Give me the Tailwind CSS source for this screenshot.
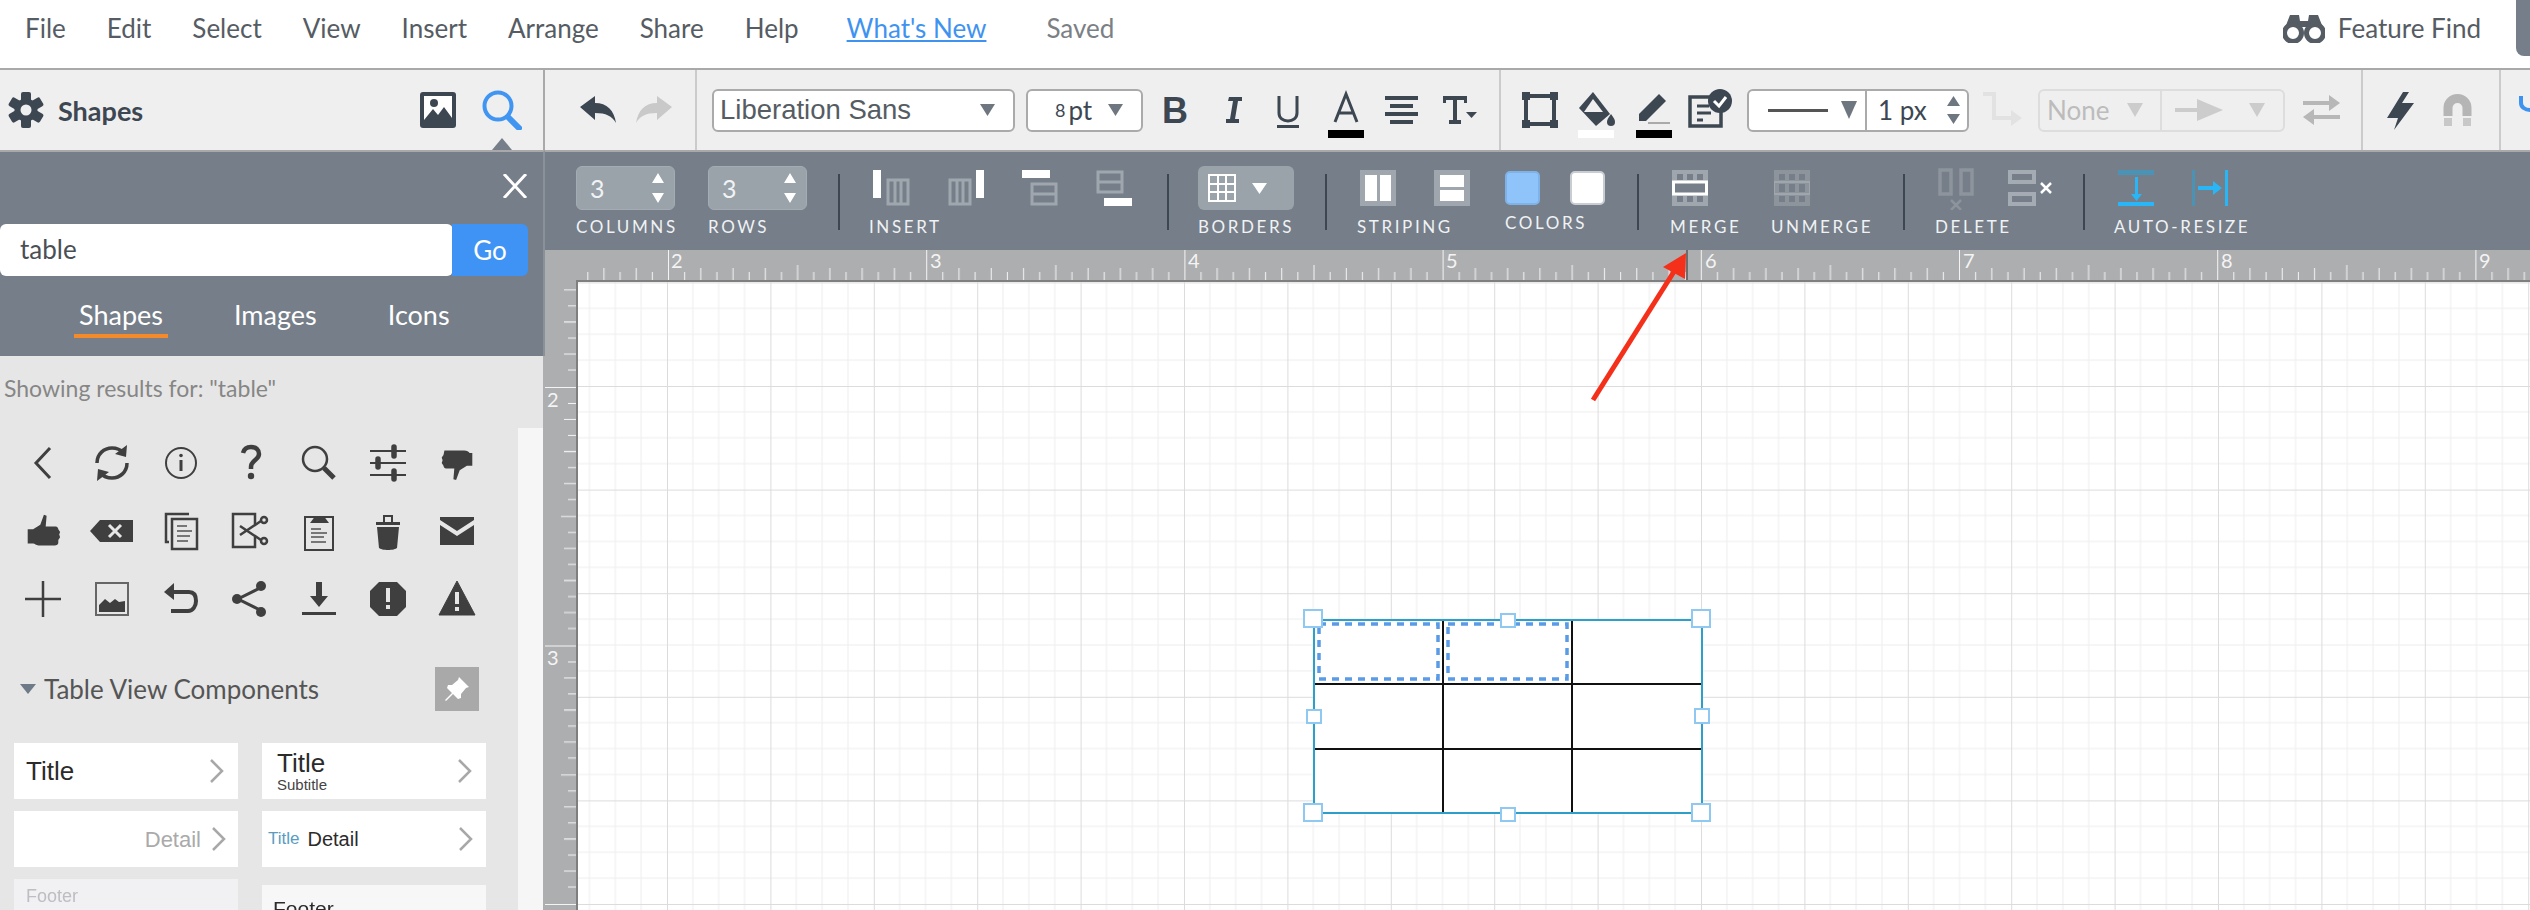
<!DOCTYPE html>
<html lang="en">
<head>
<meta charset="UTF-8">
<title>Lucidchart</title>
<script src="https://cdn.jsdelivr.net/npm/@tailwindcss/browser@4"></script>
</head>
<body class="font-[Lato,sans-serif] bg-white overflow-hidden">
<div class="relative w-[2530px] h-[910px] overflow-hidden">

  <!-- menu -->
  <header class="h-[70px] border-b-2 border-[#a9a9a9] flex items-start pl-[25px] pt-[12px] text-[26px] leading-[32px] text-[#555c63]">
    <nav class="flex gap-[41px]">
      <span>File</span><span>Edit</span><span>Select</span><span>View</span><span>Insert</span><span>Arrange</span><span>Share</span><span>Help</span>
    </nav>
    <a class="ml-[48px] text-[#3f93f0] underline">What's New</a>
    <span class="ml-[60px] text-[#7b8085]">Saved</span>
    <svg class="ml-auto mt-[1px]" width="42" height="30" viewBox="0 0 42 30" fill="#555c63"><path d="M7 2h9l1 6h8l1-6h9l7 18-12 3-6-9h-6l-6 9-12-3z"/><circle cx="10" cy="20" r="8.5" fill="#fff" stroke="#555c63" stroke-width="5"/><circle cx="32" cy="20" r="8.5" fill="#fff" stroke="#555c63" stroke-width="5"/></svg>
    <span class="ml-[13px]">Feature Find</span>
    <div class="ml-[35px] -mt-[12px] w-[14px] h-[56px] bg-[#757e89] rounded-bl-[8px]"></div>
  </header>

  <div class="flex h-[840px]">
    <!-- left panel -->
    <aside class="w-[545px] shrink-0 flex flex-col">
      <div class="h-[80px] bg-[#efefef] border-r-2 border-[#a9a9a9] flex items-center pl-[8px] relative">
        <svg width="36" height="36" viewBox="0 0 36 36" fill="#3d4752"><g><rect x="13" y="0" width="10" height="36" rx="2"/><rect x="13" y="0" width="10" height="36" rx="2" transform="rotate(60 18 18)"/><rect x="13" y="0" width="10" height="36" rx="2" transform="rotate(120 18 18)"/></g><circle cx="18" cy="18" r="11.5"/><circle cx="18" cy="18" r="5.5" fill="#efefef"/></svg>
        <span class="ml-[14px] text-[27px] font-bold text-[#3d4752] mt-[3px]">Shapes</span>
        <svg class="ml-auto" width="36" height="36" viewBox="0 0 36 36"><rect width="36" height="36" rx="3" fill="#3d4752"/><rect x="4" y="4" width="28" height="26" fill="#fff"/><circle cx="14" cy="11" r="4" fill="#3d4752"/><path d="M4 28l9-11 5 6 6-8 8 11v4H4z" fill="#3d4752"/></svg>
        <svg class="ml-[26px] mr-[21px]" width="40" height="40" viewBox="0 0 40 40" fill="none" stroke="#4095f2"><circle cx="16" cy="16" r="13.5" stroke-width="4"/><path d="M26 27l11 11" stroke-width="6" stroke-linecap="round"/></svg>
        <div class="absolute left-[492px] bottom-0 w-0 h-0 border-x-[10px] border-x-transparent border-b-[12px] border-b-[#757e89]"></div>
      </div>
      <div class="h-[206px] bg-[#757e89] border-t-2 border-[#a9a9a9] border-r-2 border-r-[#8a9199] text-white">
        <div class="flex justify-end pr-[15px] pt-[22px]">
          <svg width="26" height="24" viewBox="0 0 26 24" stroke="#fff" stroke-width="3"><path d="M2 0l22 24M24 0L2 24"/></svg>
        </div>
        <div class="flex mt-[26px] w-[528px] h-[52px]">
          <div class="flex-1 bg-white rounded-[6px] pl-[20px] text-[26px] leading-[50px] text-[#4a4f55]">table</div>
          <div class="w-[76px] -ml-[1px] bg-[#3f93f5] rounded-r-[6px] text-center text-[26px] leading-[52px]">Go</div>
        </div>
        <div class="flex mt-[20px] text-[27px] leading-[38px]">
          <span class="ml-[74px] w-[94px] text-center border-b-4 border-[#f58a2a]">Shapes</span>
          <span class="ml-[66px]">Images</span>
          <span class="ml-[71px]">Icons</span>
        </div>
      </div>
      <div class="relative flex-1 bg-[#e6e6e6] border-r-2 border-[#adaeb0] overflow-hidden">
        <div class="absolute right-0 top-[72px] bottom-0 w-[25px] bg-[#f6f6f6]"></div>
        <p class="pl-[4px] pt-[18px] text-[23px] leading-[28px] text-[#868686]">Showing results for: "table"</p>
        <div class="grid grid-cols-[repeat(7,69px)] auto-rows-[68px] pl-[8px] mt-[27px] w-[500px] text-[#3f3f3f]">
          <div class="flex items-center justify-center"><svg width="40" height="40" viewBox="0 0 40 40" fill="none" stroke="currentColor" stroke-width="3"><path d="M27 5L13 20l14 15"/></svg></div>
          <div class="flex items-center justify-center"><svg width="40" height="40" viewBox="0 0 40 40" fill="none" stroke="currentColor" stroke-width="3.5"><path d="M5 20C5 11 12 5 20 5c5 0 9 2 12 5"/><path d="M35 20c0 9-7 15-15 15-5 0-9-2-12-5"/><path d="M35 2l-1 12-11-3zM5 38l1-12 11 3z" fill="currentColor" stroke="none"/></svg></div>
          <div class="flex items-center justify-center"><svg width="40" height="40" viewBox="0 0 40 40" fill="none" stroke="currentColor" stroke-width="2"><circle cx="20" cy="20" r="15"/><path d="M20 17v11" stroke-width="3"/><circle cx="20" cy="12.5" r="1.8" fill="currentColor" stroke="none"/></svg></div>
          <div class="flex items-center justify-center"><svg width="40" height="40" viewBox="0 0 40 40" fill="none" stroke="currentColor" stroke-width="4.5"><path d="M13 10c1-4 4-6 8-6 5 0 8 3 8 7 0 6-8 6-8 13v2"/><circle cx="21" cy="33" r="3.2" fill="currentColor" stroke="none"/></svg></div>
          <div class="flex items-center justify-center"><svg width="40" height="40" viewBox="0 0 40 40" fill="none" stroke="currentColor" stroke-width="2.5"><circle cx="16" cy="16" r="12"/><path d="M25 25l10 10" stroke-width="5"/></svg></div>
          <div class="flex items-center justify-center"><svg width="40" height="40" viewBox="0 0 40 40" fill="none" stroke="currentColor" stroke-width="2"><path d="M2 8h36M2 20h36M2 32h36"/><g stroke-width="5.5" stroke-linecap="round"><path d="M26 4v9M10 16v8M26 28v8"/></g></svg></div>
          <div class="flex items-center justify-center"><svg width="36" height="36" viewBox="0 0 40 40" fill="currentColor"><path d="M6 6h22c3 0 5 1 6 3h3v14h-6l-8 5-4 11-3-1 1-12H8c-2 0-3-2-3-3l-2-3 1-3-1-3 2-3z"/></svg></div>

          <div class="flex items-center justify-center"><svg width="36" height="36" viewBox="0 0 40 40" fill="currentColor"><path d="M3 18h6l8-5 4-11 3 1-1 12h11c2 0 3 2 3 3l2 3-1 3 1 3-2 3 0 3c0 2-2 3-4 3H15c-3 0-4-2-6-2H3z"/></svg></div>
          <div class="flex items-center justify-center"><svg width="44" height="40" viewBox="0 0 44 40"><path d="M0 20L10 9h33v22H10z" fill="currentColor"/><path d="M19 14l12 12M31 14L19 26" stroke="#e6e6e6" stroke-width="3"/></svg></div>
          <div class="flex items-center justify-center"><svg width="40" height="40" viewBox="0 0 40 40" fill="none" stroke="currentColor" stroke-width="2.5"><path d="M28 3H5v28h3"/><rect x="11" y="8" width="25" height="30"/><path d="M16 15h10M16 20h15M16 25h13M16 30h11" stroke-width="1.8" stroke="#777"/></svg></div>
          <div class="flex items-center justify-center"><svg width="40" height="40" viewBox="0 0 40 40" fill="none" stroke="currentColor" stroke-width="2.5"><path d="M25 13V3H3v33h22V26"/><path d="M10 24l21-14M10 15l21 14" stroke-width="2.5"/><circle cx="34" cy="9" r="3"/><circle cx="34" cy="30" r="3"/></svg></div>
          <div class="flex items-center justify-center"><svg width="40" height="40" viewBox="0 0 40 40" fill="none" stroke="currentColor" stroke-width="2"><rect x="6" y="6" width="28" height="33"/><path d="M13 11l3-4h3a2.5 2.5 0 0 1 4 0h2l3 4z" fill="currentColor"/><path d="M12 18h10M12 22h16M12 26h13M12 31h15" stroke="#777" stroke-width="1.8"/></svg></div>
          <div class="flex items-center justify-center"><svg width="40" height="40" viewBox="0 0 40 40" fill="currentColor"><path d="M8 11h24v3H8zM15 4h10v7h-2V6h-6v5h-2z"/><path d="M9 16h22l-2 21c-1 1-5 2-9 2s-8-1-9-2z"/></svg></div>
          <div class="flex items-center justify-center"><svg width="40" height="40" viewBox="0 0 40 40" fill="currentColor"><path d="M3 6h34v3L20 20 3 9zM3 14l17 11 17-11v20H3z"/></svg></div>

          <div class="flex items-center justify-center"><svg width="40" height="40" viewBox="0 0 40 40" stroke="currentColor" stroke-width="2.5"><path d="M2 20h36M20 2v36"/></svg></div>
          <div class="flex items-center justify-center"><svg width="40" height="40" viewBox="0 0 40 40" fill="none" stroke="#666" stroke-width="2"><rect x="4" y="4" width="32" height="32"/><path d="M7 33v-7l6-6 5 4 5-4 4 3 6-1v11z" fill="#3f3f3f" stroke="none"/></svg></div>
          <div class="flex items-center justify-center"><svg width="40" height="40" viewBox="0 0 40 40" fill="none" stroke="currentColor" stroke-width="4"><path d="M8 13h20c5 0 7 4 7 9s-3 10-8 10H10"/><path d="M13 4L3 13l10 8z" fill="currentColor" stroke="none"/></svg></div>
          <div class="flex items-center justify-center"><svg width="40" height="40" viewBox="0 0 40 40" fill="currentColor"><path d="M32 8L8 20l24 12" fill="none" stroke="currentColor" stroke-width="3"/><circle cx="31" cy="7" r="5"/><circle cx="7" cy="20" r="5"/><circle cx="31" cy="33" r="5"/></svg></div>
          <div class="flex items-center justify-center"><svg width="40" height="40" viewBox="0 0 40 40" fill="currentColor"><path d="M17 3h6v14h6L20 28 11 17h6zM3 33h34v3H3z"/></svg></div>
          <div class="flex items-center justify-center"><svg width="40" height="40" viewBox="0 0 40 40"><path d="M11 3h18l9 9v16l-9 9H11l-9-9V12z" fill="currentColor"/><path d="M18 9h4v14h-4zM18 26h4v4h-4z" fill="#e6e6e6"/></svg></div>
          <div class="flex items-center justify-center"><svg width="40" height="40" viewBox="0 0 40 40"><path d="M20 2l18 34H2z" fill="currentColor" stroke="currentColor" stroke-linejoin="round"/><path d="M18 13h4v12h-4zM18 28h4v4h-4z" fill="#e6e6e6"/></svg></div>
        </div>
        <div class="flex items-center mt-[34px] h-[44px] pl-[20px] pr-[64px]">
          <div class="w-0 h-0 border-x-[8px] border-x-transparent border-t-[10px] border-t-[#6f7a88]"></div>
          <span class="ml-[8px] text-[26px] text-[#555]">Table View Components</span>
          <div class="ml-auto w-[44px] h-[44px] bg-[#a9a9a9] flex items-center justify-center">
            <svg width="26" height="26" viewBox="0 0 26 26" fill="#fff"><path d="M15 1l10 10-3 1-5 6 0 4-3 1-5-5-7 7-1-1 7-7-5-5 1-3 4 0 6-5z"/></svg>
          </div>
        </div>
        <!-- result cards are a blurry preview picture in the app -->
        <div class="grid grid-cols-[224px_224px] gap-x-[24px] gap-y-[12px] pl-[14px] mt-[32px] auto-rows-[56px] font-['Liberation_Sans',sans-serif] blur-[0.5px]">
          <div class="bg-white flex items-center pl-[12px] pr-[14px] justify-between text-[26px] text-[#2b2b2b]">Title
            <svg width="14" height="24" viewBox="0 0 14 24" fill="none" stroke="#a8a8a8" stroke-width="2.5"><path d="M1 1l11 11L1 23"/></svg></div>
          <div class="bg-white flex items-center pl-[15px] pr-[14px] justify-between text-[#2b2b2b]">
            <div class="leading-none"><div class="text-[26px]">Title</div><div class="text-[15px] mt-[1px] text-[#444]">Subtitle</div></div>
            <svg width="14" height="24" viewBox="0 0 14 24" fill="none" stroke="#a8a8a8" stroke-width="2.5"><path d="M1 1l11 11L1 23"/></svg></div>
          <div class="bg-white flex items-center justify-end pr-[12px] text-[22px] text-[#aaa]">Detail
            <svg class="ml-[11px]" width="14" height="24" viewBox="0 0 14 24" fill="none" stroke="#a8a8a8" stroke-width="2.5"><path d="M1 1l11 11L1 23"/></svg></div>
          <div class="bg-white flex items-center pl-[6px] pr-[13px]">
            <span class="text-[17px] text-[#5a9cbf]">Title</span><span class="ml-[8px] text-[20px] text-[#2b2b2b]">Detail</span>
            <svg class="ml-auto" width="14" height="24" viewBox="0 0 14 24" fill="none" stroke="#a8a8a8" stroke-width="2.5"><path d="M1 1l11 11L1 23"/></svg></div>
          <div class="bg-[#f1f1f4] pl-[12px] pt-[4px] text-[18px] text-[#bdbdc2] h-[56px]">Footer</div>
          <div class="bg-[#f7f7f7] mt-[6px] pl-[11px] pt-[8px] text-[21px] text-[#2b2b2b] h-[50px]">Footer</div>
        </div>
      </div>
    </aside>

    <!-- right side -->
    <main class="flex-1 min-w-0 flex flex-col">
      <!-- format toolbar -->
      <div class="h-[80px] bg-[#efefef] flex items-center shrink-0 overflow-hidden text-[#3d4752] [&>*]:shrink-0">
        <div class="w-[152px] h-full border-r-2 border-[#cbcbcb] flex items-center pl-[35px]">
          <svg width="36" height="28" viewBox="0 0 36 28" fill="#3d4752"><path d="M0 11L15 0v7c12 0 19 7 21 20-4-7-10-10-21-10v7z"/></svg>
          <svg class="ml-[20px]" width="36" height="28" viewBox="0 0 36 28" fill="#c9c9c9"><path d="M36 11L21 0v7C9 7 2 14 0 27c4-7 10-10 21-10v7z"/></svg>
        </div>
        <div class="ml-[15px] w-[303px] h-[43px] bg-white border-2 border-[#aaa] rounded-[6px] flex items-center pl-[6px] pr-[18px] font-['Liberation_Sans',sans-serif] text-[27.5px] text-[#555c63]">Liberation Sans
          <svg class="ml-auto" width="15" height="12" viewBox="0 0 15 12" fill="#6e7780"><path d="M0 0h15L7.5 12z"/></svg></div>
        <div class="ml-[11px] w-[117px] h-[43px] bg-white border-2 border-[#aaa] rounded-[6px] flex items-center pl-[27px] pr-[18px]">
          <span class="text-[18px] mr-[3px]">8</span><span class="text-[26px]">pt</span>
          <svg class="ml-auto" width="15" height="12" viewBox="0 0 15 12" fill="#6e7780"><path d="M0 0h15L7.5 12z"/></svg></div>
        <svg class="ml-[21px]" width="23" height="80" viewBox="0 0 23 80"><text x="-2" y="53" font-family="Liberation Sans" font-weight="700" font-size="36" fill="#3d4752">B</text></svg>
        <svg class="ml-[35px]" width="20" height="80" viewBox="0 0 20 80" fill="#3d4752"><path d="M7 27h13v4h-4l-3 18h4v4H4v-4h4l3-18H6z"/></svg>
        <svg class="ml-[35px]" width="22" height="80" viewBox="0 0 22 80"><path d="M2 26v17c0 5 4 8 9 8s9-3 9-8V26" fill="none" stroke="#3d4752" stroke-width="3"/><rect y="55" width="22" height="3" fill="#3d4752"/></svg>
        <svg class="ml-[29px]" width="36" height="80" viewBox="0 0 36 80"><path d="M7 52l11-28 11 28M11 43h14" fill="none" stroke="#3d4752" stroke-width="3"/><rect y="60" width="36" height="8" fill="#000"/></svg>
        <svg class="ml-[21px]" width="33" height="80" viewBox="0 0 33 80" fill="#3d4752"><rect y="26" width="33" height="4"/><rect x="5" y="34" width="23" height="4"/><rect y="42" width="33" height="4"/><rect x="5" y="50" width="23" height="4"/></svg>
        <svg class="ml-[25px]" width="34" height="80" viewBox="0 0 34 80" fill="#3d4752"><path d="M0 26h24v7h-3v-3h-7v20h4v4H6v-4h4V30H3v3H0z"/><path d="M23 42h11l-5.5 6z"/></svg>
        <div class="ml-[22px] w-[2px] h-full bg-[#cbcbcb]"></div>
        <svg class="ml-[21px]" width="36" height="80" viewBox="0 0 36 80" fill="#3d4752"><path d="M4 26h28v28H4z" fill="none" stroke="#3d4752" stroke-width="4"/><rect y="22" width="8" height="8"/><rect x="28" y="22" width="8" height="8"/><rect y="50" width="8" height="8"/><rect x="28" y="50" width="8" height="8"/></svg>
        <svg class="ml-[20px]" width="38" height="80" viewBox="0 0 38 80"><path d="M15 22l17 22-14 12L1 38z" fill="#3d4752"/><path d="M15 29l10 13H6z" fill="#efefef"/><path d="M33 44c3 4 4 6 4 8a4 4 0 0 1-8 0c0-2 1-4 4-8z" fill="#3d4752"/><rect y="60" width="36" height="8" fill="#fff"/></svg>
        <svg class="ml-[20px]" width="36" height="80" viewBox="0 0 36 80"><path d="M3 44l20-20 7 7-20 20H3z" fill="#3d4752"/><rect x="12" y="52" width="22" height="2" fill="#aaa"/><rect y="60" width="36" height="8" fill="#000"/></svg>
        <svg class="ml-[16px]" width="44" height="80" viewBox="0 0 44 80"><path d="M22 27H2v29h31V37" fill="none" stroke="#3d4752" stroke-width="3.5"/><path d="M9 36h12M9 43h14M9 50h6" stroke="#3d4752" stroke-width="3"/><circle cx="32" cy="31" r="12" fill="#3d4752"/><path d="M26 31l5 5 7-9" fill="none" stroke="#fff" stroke-width="3"/></svg>
        <div class="ml-[15px] w-[222px] h-[43px] bg-white border-2 border-[#aaa] rounded-[6px] flex items-center">
          <div class="w-[118px] h-full border-r-2 border-[#aaa] flex items-center pl-[19px] shrink-0">
            <div class="w-[60px] h-[3px] bg-[#555]"></div>
            <svg class="ml-[13px]" width="16" height="18" viewBox="0 0 16 18" fill="#6e7780"><path d="M0 0h16L8 18z"/></svg>
          </div>
          <span class="ml-[11px] text-[26px]">1 px</span>
          <svg class="ml-auto mr-[7px]" width="13" height="28" viewBox="0 0 13 28" fill="#6e7780"><path d="M6.5 0L13 10H0zM0 18h13l-6.5 10z"/></svg>
        </div>
        <svg class="ml-[14px]" width="40" height="80" viewBox="0 0 40 80" fill="none" stroke="#e2e2e2" stroke-width="4"><path d="M0 24h11v24h18"/><path d="M28 40l11 8-11 8z" fill="#e2e2e2" stroke="none"/></svg>
        <div class="ml-[15px] w-[247px] h-[43px] border-2 border-[#ddd] rounded-[6px] flex items-center text-[#bcbcbc]">
          <div class="w-[122px] h-full border-r-2 border-[#ddd] flex items-center pl-[7px] text-[26px] shrink-0">None
            <svg class="ml-auto mr-[17px]" width="16" height="14" viewBox="0 0 16 14" fill="#ccc"><path d="M0 0h16L8 14z"/></svg></div>
          <svg class="ml-[13px]" width="50" height="22" viewBox="0 0 50 22" fill="#ccc"><rect y="9" width="24" height="4"/><path d="M22 0l26 11-26 11z"/></svg>
          <svg class="ml-[24px]" width="16" height="14" viewBox="0 0 16 14" fill="#ccc"><path d="M0 0h16L8 14z"/></svg>
        </div>
        <svg class="ml-[18px]" width="37" height="80" viewBox="0 0 37 80" fill="#b7b7b7"><rect y="31" width="28" height="4"/><path d="M26 25l11 8-11 8zM11 39L0 47l11 8z"/><rect x="9" y="45" width="28" height="4"/></svg>
        <div class="ml-[21px] w-[2px] h-full bg-[#cbcbcb]"></div>
        <svg class="ml-[24px]" width="27" height="80" viewBox="0 0 27 80" fill="#3d4752"><path d="M16 22L0 48h11L7 60l20-27H15l7-11z"/></svg>
        <svg class="ml-[29px]" width="29" height="80" viewBox="0 0 29 80"><path d="M5 46V38a9.5 9.5 0 0 1 19 0v8" fill="none" stroke="#b5b5b5" stroke-width="9"/><path d="M1 48h8v8H1zM20 48h8v8h-8z" fill="#c8c8c8"/></svg>
        <div class="ml-[27px] w-[2px] h-full bg-[#cbcbcb]"></div>
        <svg class="ml-[18px]" width="21" height="80" viewBox="0 0 21 80"><path d="M2 26v7c0 4 4 7 9 7" fill="none" stroke="#3f93f0" stroke-width="4"/></svg>
      </div>

      <!-- table toolbar -->
      <div class="h-[100px] bg-[#757e89] border-t-2 border-[#a9a9a9] flex shrink-0 text-[#f0f2f4] text-[17px] leading-[20px] tracking-[2.6px] whitespace-nowrap [&>*]:shrink-0">
        <div class="ml-[31px] w-[99px] pt-[14px]">
          <div class="h-[44px] bg-[#9aa2aa] border border-[#a5abb2] rounded-[6px] flex items-center pl-[13px] pr-[10px] text-[25px]">3
            <svg class="ml-auto" width="12" height="30" viewBox="0 0 12 30" fill="#fff"><path d="M6 0l6 10H0zM0 20h12l-6 10z"/></svg></div>
          <div class="mt-[7px]">COLUMNS</div>
        </div>
        <div class="ml-[33px] w-[99px] pt-[14px]">
          <div class="h-[44px] bg-[#9aa2aa] border border-[#a5abb2] rounded-[6px] flex items-center pl-[13px] pr-[10px] text-[25px]">3
            <svg class="ml-auto" width="12" height="30" viewBox="0 0 12 30" fill="#fff"><path d="M6 0l6 10H0zM0 20h12l-6 10z"/></svg></div>
          <div class="mt-[7px]">ROWS</div>
        </div>
        <div class="ml-[31px] mt-[22px] w-[2px] h-[56px] bg-[#3d4752]"></div>

        <div class="ml-[29px] w-[263px] pt-[18px]">
          <div class="h-[36px] flex pl-[4px]">
            <svg width="37" height="36" viewBox="0 0 37 36"><rect width="8" height="28" fill="#fff"/><path d="M15 10h20v24H15zM22 10v24M28 10v24" fill="none" stroke="#a0a6ad" stroke-width="3"/></svg>
            <svg class="ml-[38px]" width="36" height="36" viewBox="0 0 36 36"><rect x="28" width="8" height="28" fill="#fff"/><path d="M2 10h20v24H2zM9 10v24M15 10v24" fill="none" stroke="#a0a6ad" stroke-width="3"/></svg>
            <svg class="ml-[38px]" width="36" height="36" viewBox="0 0 36 36"><rect width="28" height="8" fill="#fff"/><path d="M10 14h24v20H10zM10 24h24" fill="none" stroke="#a0a6ad" stroke-width="3"/></svg>
            <svg class="ml-[38px]" width="36" height="36" viewBox="0 0 36 36"><rect x="8" y="28" width="28" height="8" fill="#fff"/><path d="M2 2h24v20H2zM2 12h24" fill="none" stroke="#a0a6ad" stroke-width="3"/></svg>
          </div>
          <div class="mt-[11px]">INSERT</div>
        </div>
        <div class="ml-[35px] mt-[22px] w-[2px] h-[56px] bg-[#3d4752]"></div>

        <div class="ml-[29px] w-[96px] pt-[14px]">
          <div class="h-[44px] bg-[#9aa2aa] rounded-[6px] flex items-center pl-[10px]">
            <svg width="28" height="28" viewBox="0 0 28 28" fill="none" stroke="#fff" stroke-width="2"><path d="M1 1h26v26H1zM1 10h26M1 18h26M10 1v26M18 1v26"/></svg>
            <svg class="ml-[16px]" width="15" height="11" viewBox="0 0 15 11" fill="#fff"><path d="M0 0h15L7.5 11z"/></svg>
          </div>
          <div class="mt-[7px]">BORDERS</div>
        </div>
        <div class="ml-[31px] mt-[22px] w-[2px] h-[56px] bg-[#3d4752]"></div>

        <div class="ml-[30px] w-[148px] pt-[18px]">
          <div class="h-[36px] flex pl-[3px]">
            <svg width="36" height="36" viewBox="0 0 36 36"><rect width="36" height="36" fill="#a0a6ad"/><rect x="5" y="5" width="12" height="26" fill="#fff"/><rect x="20" y="5" width="11" height="26" fill="#fff"/></svg>
            <svg class="ml-[38px]" width="36" height="36" viewBox="0 0 36 36"><rect width="36" height="36" fill="#a0a6ad"/><rect x="6" y="5" width="24" height="12" fill="#fff"/><rect x="6" y="20" width="24" height="11" fill="#fff"/></svg>
          </div>
          <div class="mt-[11px]">STRIPING</div>
        </div>
        <div class="w-[100px] pt-[19px]">
          <div class="flex">
            <div class="w-[35px] h-[34px] rounded-[5px] bg-[#8fc4fb] border-2 border-[#7fb3e8]"></div>
            <div class="ml-[30px] w-[35px] h-[34px] rounded-[5px] bg-white border-2 border-[#c9cdd1]"></div>
          </div>
          <div class="mt-[8px]">COLORS</div>
        </div>
        <div class="ml-[32px] mt-[22px] w-[2px] h-[56px] bg-[#3d4752]"></div>

        <div class="ml-[31px] w-[101px] pt-[18px]">
          <svg class="ml-[2px] block h-[36px]" width="36" height="36" viewBox="0 0 36 36"><rect width="36" height="36" fill="#a0a6ad"/><path d="M5 4h6v6H5zM15 4h6v6h-6zM25 4h6v6h-6zM5 26h6v6H5zM15 26h6v6h-6zM25 26h6v6h-6z" fill="#757e89"/><rect x="1.5" y="12" width="33" height="12" fill="#757e89" stroke="#fff" stroke-width="3"/></svg>
          <div class="mt-[11px]">MERGE</div>
        </div>
        <div class="w-[132px] pt-[18px]">
          <svg class="ml-[3px] block h-[36px]" width="36" height="36" viewBox="0 0 36 36"><rect width="36" height="36" fill="#8d949c"/><path d="M5 4h6v6H5zM15 4h6v6h-6zM25 4h6v6h-6zM5 26h6v6H5zM15 26h6v6h-6zM25 26h6v6h-6z" fill="#757e89"/><path d="M5 14h6v8H5zM15 14h6v8h-6zM25 14h6v8h-6z" fill="#757e89"/><path d="M0 12h36v12H0z" fill="none" stroke="#a0a6ad" stroke-width="2"/></svg>
          <div class="mt-[11px]">UNMERGE</div>
        </div>
        <div class="mt-[22px] w-[2px] h-[56px] bg-[#3d4752]"></div>

        <div class="ml-[30px] w-[148px] pt-[16px]">
          <div class="h-[38px] flex pl-[3px]">
            <svg width="36" height="42" viewBox="0 0 36 42" fill="none" stroke="#8d949c" stroke-width="3.5"><rect x="2" y="2" width="11" height="24"/><rect x="23" y="2" width="11" height="24"/><path d="M13 32l10 10M23 32L13 42" stroke-width="2.5"/></svg>
            <svg class="ml-[34px]" width="44" height="38" viewBox="0 0 44 38" fill="none" stroke="#a5abb2" stroke-width="4"><rect x="2" y="4" width="24" height="10"/><rect x="2" y="26" width="24" height="10"/><path d="M33 15l10 10M43 15L33 25" stroke="#fff" stroke-width="2.5"/></svg>
          </div>
          <div class="mt-[11px]">DELETE</div>
        </div>
        <div class="mt-[22px] w-[2px] h-[56px] bg-[#3d4752]"></div>

        <div class="ml-[29px] pt-[18px]">
          <div class="h-[36px] flex pl-[4px]">
            <svg width="36" height="36" viewBox="0 0 36 36"><rect width="36" height="5" fill="#4a93b5"/><rect y="32" width="36" height="4" fill="#29b6f6"/><path d="M17 7h3v17h4l-5.5 7L13 24h4z" fill="#29b6f6"/></svg>
            <svg class="ml-[38px]" width="36" height="36" viewBox="0 0 36 36"><rect width="3" height="36" fill="#4a93b5"/><rect x="33" width="4" height="36" fill="#29b6f6"/><path d="M6 16h15v-5l9 7-9 7v-5H6z" fill="#29b6f6"/></svg>
          </div>
          <div class="mt-[11px]">AUTO-RESIZE</div>
        </div>
      </div>

      <!-- horizontal ruler -->
      <svg class="block shrink-0 bg-[#adaeb0]" width="1985" height="30" viewBox="0 0 1985 30">
        <defs>
          <pattern id="hr" patternUnits="userSpaceOnUse" x="123" y="0" width="258.2" height="30">
            <path transform="scale(1.0087 1)" d="M0.5 0v30M16.5 30v-8M32.5 30v-12M48.5 30v-8M64.5 30v-12M80.5 30v-8M96.5 30v-12M112.5 30v-8M128.5 30v-15M144.5 30v-8M160.5 30v-12M176.5 30v-8M192.5 30v-12M208.5 30v-8M224.5 30v-12M240.5 30v-8" stroke="#f4f4f4" fill="none"/>
          </pattern>
        </defs>
        <rect x="33" width="1952" height="30" fill="url(#hr)"/>
        <g fill="#f4f4f4" font-family="Lato" font-size="20">
          <text x="126" y="18">2</text><text x="385" y="18">3</text><text x="643" y="18">4</text><text x="901" y="18">5</text><text x="1160" y="18">6</text><text x="1418" y="18">7</text><text x="1676" y="18">8</text><text x="1934" y="18">9</text>
        </g>
        <path d="M1142 0v30" stroke="#6d6d6d" stroke-width="2"/>
      </svg>

      <div class="flex flex-1 min-h-0">
        <!-- vertical ruler -->
        <svg class="block shrink-0 bg-[#adaeb0]" width="31" height="630" viewBox="0 0 31 630">
          <defs>
            <pattern id="vr" patternUnits="userSpaceOnUse" x="0" y="107" width="31" height="258.5">
              <path d="M0 0.5h31M23 16.5h8M19 32.5h12M23 48.5h8M19 64.5h12M23 80.5h8M19 96.5h12M23 112.5h8M16 129.5h15M23 145.5h8M19 161.5h12M23 177.5h8M19 193.5h12M23 209.5h8M19 225.5h12M23 241.5h8" stroke="#f4f4f4" fill="none"/>
            </pattern>
          </defs>
          <rect width="31" height="630" fill="url(#vr)"/>
          <g fill="#f4f4f4" font-family="Lato" font-size="20"><text x="2" y="127">2</text><text x="2" y="385">3</text></g>
        </svg>

        <!-- canvas -->
        <div class="relative flex-1 border-t-2 border-l-2 border-[#7f7f7f] bg-white overflow-hidden">
          <svg class="block" width="1952" height="628" viewBox="0 0 1952 628">
            <defs>
              <pattern id="grid" patternUnits="userSpaceOnUse" x="89" y="104" width="103.4" height="103.6">
                <path d="M25.85 0v103.6M51.7 0v103.6M77.55 0v103.6M0 25.9h103.4M0 51.8h103.4M0 77.7h103.4" stroke="#eeeeee" stroke-width="1" fill="none"/>
                <path d="M0.5 0v103.6M0 0.5h103.4" stroke="#dcdcdc" stroke-width="1" fill="none"/>
              </pattern>
            </defs>
            <rect width="1952" height="628" fill="url(#grid)"/>
            <!-- table shape -->
            <rect x="736" y="338" width="388" height="193" fill="#fff"/>
            <path d="M865 338v193M994 338v193M736 402h388M736 467h388" stroke="#111" stroke-width="2" fill="none"/>
            <rect x="736" y="338" width="388" height="193" fill="none" stroke="#2e9fc9" stroke-width="2"/>
            <g fill="none" stroke="#5a9be8" stroke-width="3.5" stroke-dasharray="7 6">
              <rect x="741" y="342" width="119" height="55"/>
              <rect x="870" y="342" width="119" height="55"/>
            </g>
            <g fill="#fff" stroke="#8fc8f0" stroke-width="2">
              <rect x="726" y="328" width="18" height="17"/>
              <rect x="1114" y="328" width="18" height="17"/>
              <rect x="726" y="522" width="18" height="17"/>
              <rect x="1114" y="522" width="18" height="17"/>
              <rect x="923" y="332" width="14" height="13"/>
              <rect x="729" y="428" width="14" height="13"/>
              <rect x="1117" y="427" width="14" height="14"/>
              <rect x="923" y="526" width="14" height="13"/>
            </g>
          </svg>
        </div>
      </div>
    </main>
  </div>

  <!-- annotation arrow drawn over the screenshot -->
  <svg class="absolute top-0 left-0 pointer-events-none" width="2530" height="910" viewBox="0 0 2530 910">
    <path d="M1593 400L1675 270" stroke="#f5301a" stroke-width="5" fill="none"/>
    <path d="M1686 253l-23 14 22 12z" fill="#f5301a"/>
  </svg>
</div>
</body>
</html>
